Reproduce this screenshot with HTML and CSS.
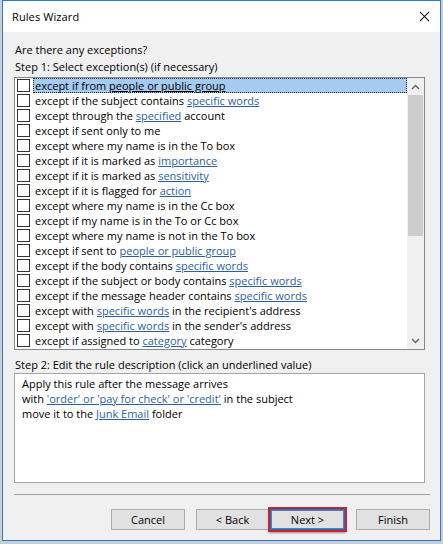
FILE: index.html
```html
<!DOCTYPE html>
<html>
<head>
<meta charset="utf-8">
<link rel="stylesheet" href="styles.css">
</head>
<body>
<div class="window">
  <div class="titlebar">
    <span class="title">Rules Wizard</span>
    <svg class="close" width="12" height="12" viewBox="0 0 12 12"><path d="M1 1 L11 11 M11 1 L1 11" stroke="#111" stroke-width="1.1" fill="none"/></svg>
  </div>
  <div class="content">
    <div class="label q">Are there any exceptions?</div>
    <div class="label step1">Step 1: Select exception(s) (if necessary)</div>
    <div class="listbox">
      <div class="rows">
        <div class="row"><span class="cb"></span><span class="txt selected">except if from <u>people or public group</u></span></div>
        <div class="row"><span class="cb"></span><span class="txt">except if the subject contains <a>specific words</a></span></div>
        <div class="row"><span class="cb"></span><span class="txt">except through the <a>specified</a> account</span></div>
        <div class="row"><span class="cb"></span><span class="txt">except if sent only to me</span></div>
        <div class="row"><span class="cb"></span><span class="txt">except where my name is in the To box</span></div>
        <div class="row"><span class="cb"></span><span class="txt">except if it is marked as <a>importance</a></span></div>
        <div class="row"><span class="cb"></span><span class="txt">except if it is marked as <a>sensitivity</a></span></div>
        <div class="row"><span class="cb"></span><span class="txt">except if it is flagged for <a>action</a></span></div>
        <div class="row"><span class="cb"></span><span class="txt">except where my name is in the Cc box</span></div>
        <div class="row"><span class="cb"></span><span class="txt">except if my name is in the To or Cc box</span></div>
        <div class="row"><span class="cb"></span><span class="txt">except where my name is not in the To box</span></div>
        <div class="row"><span class="cb"></span><span class="txt">except if sent to <a>people or public group</a></span></div>
        <div class="row"><span class="cb"></span><span class="txt">except if the body contains <a>specific words</a></span></div>
        <div class="row"><span class="cb"></span><span class="txt">except if the subject or body contains <a>specific words</a></span></div>
        <div class="row"><span class="cb"></span><span class="txt">except if the message header contains <a>specific words</a></span></div>
        <div class="row"><span class="cb"></span><span class="txt">except with <a>specific words</a> in the recipient's address</span></div>
        <div class="row"><span class="cb"></span><span class="txt">except with <a>specific words</a> in the sender's address</span></div>
        <div class="row"><span class="cb"></span><span class="txt">except if assigned to <a>category</a> category</span></div>
      </div>
      <div class="scrollbar">
        <div class="sbtn"><svg width="9" height="6" viewBox="0 0 9 6"><polyline points="1,5 4.5,1.5 8,5" fill="none" stroke="#606060" stroke-width="1.4"/></svg></div>
        <div class="track"><div class="thumb"></div></div>
        <div class="sbtn"><svg width="9" height="6" viewBox="0 0 9 6"><polyline points="1,1 4.5,4.5 8,1" fill="none" stroke="#606060" stroke-width="1.4"/></svg></div>
      </div>
    </div>
    <div class="label step2">Step 2: Edit the rule description (click an underlined value)</div>
    <div class="desc">
      <div>Apply this rule after the message arrives</div>
      <div>with <a>'order' or 'pay for check' or 'credit'</a> in the subject</div>
      <div>move it to the <a>Junk Email</a> folder</div>
    </div>
    <div class="sep"></div>
    <div class="buttons">
      <button class="btn cancel">Cancel</button>
      <button class="btn back">&lt; Back</button>
      <button class="btn next">Next &gt;</button>
      <button class="btn finish">Finish</button>
    </div>
  </div>
</div>
</body>
</html>
```

FILE: styles.css
```css
* { box-sizing: border-box; }
html, body { margin: 0; padding: 0; }
body {
  background: #c9ced4;
  width: 443px;
  height: 544px;
  overflow: hidden;
  font-family: "Open Sans", "Noto Sans", sans-serif;
  font-size: 11px;
  color: #000;
}
.window {
  margin-left: 2px;
  width: 439px;
  height: 541px;
  border: 1px solid #2b7bd4;
  background: #f0f0f0;
  display: flex;
  flex-direction: column;
}
.titlebar {
  height: 31px;
  background: #fff;
  display: flex;
  align-items: center;
  padding-left: 9px;
  padding-right: 9px;
  justify-content: space-between;
  flex: none;
}
.title { font-size: 11px; line-height: 15px; letter-spacing: 0.1px; }
.close { width: 11px; height: 11px; margin-right: 1px; }
.content {
  flex: 1;
  padding-left: 11px;
  display: flex;
  flex-direction: column;
}
.label { line-height: 17px; padding-left: 1px; }
.q { margin-top: 9px; }
.listbox {
  margin-top: 2px;
  width: 411px;
  height: 273px;
  border: 1px solid #828790;
  background: #fff;
  display: flex;
}
.rows { flex: 1; padding-top: 0; }
.row {
  height: 15px;
  display: flex;
  align-items: center;
}
.cb {
  width: 13px;
  height: 13px;
  border: 1px solid #333;
  background: #fff;
  margin-left: 2px;
  flex: none;
}
.txt {
  margin-left: 3px;
  padding-left: 1px;
  height: 15px;
  line-height: 13px;
  flex: 1;
  white-space: nowrap;
  border: 1px solid transparent;
}
.txt.selected {
  background: #a5cbf0;
  border: 1px dotted #222;
}
a { color: #2c5fa5; text-decoration: underline; }
.scrollbar {
  width: 17px;
  background: #f0f0f0;
  display: flex;
  flex-direction: column;
}
.sbtn {
  height: 17px;
  display: flex;
  align-items: center;
  justify-content: center;
  flex: none;
}
.track { flex: 1; }
.thumb { height: 141px; background: #cdcdcd; margin: 0 1px; }
.step2 { margin-top: 6px; }
.desc {
  width: 411px;
  height: 110px;
  border: 1px solid #a5a5a5;
  background: #fff;
  padding: 2px 0 0 7px;
  line-height: 15px;
  white-space: nowrap;
}
.sep {
  margin-top: 11px;
  width: 416px;
  height: 1px;
  background: #a0a0a0;
}
.buttons {
  margin-top: 14px;
  display: flex;
}
.btn {
  height: 21px;
  font-family: inherit;
  font-size: 11px;
  color: #000;
  background: #e1e1e1;
  border: 1px solid #adadad;
  padding: 0;
}
.cancel { margin-left: 97px; width: 74px; }
.back { margin-left: 11px; width: 73px; }
.next {
  margin-left: 1px;
  width: 75px;
  border: 1px solid #0078d7;
  box-shadow: inset 0 0 0 1px #5a7fa8, 0 2px 2px 1px rgba(60, 20, 20, 0.45);
  outline: 2px solid #d11f2d;
  outline-offset: 0;
  position: relative;
}
.finish { margin-left: 11px; width: 74px; }
```
